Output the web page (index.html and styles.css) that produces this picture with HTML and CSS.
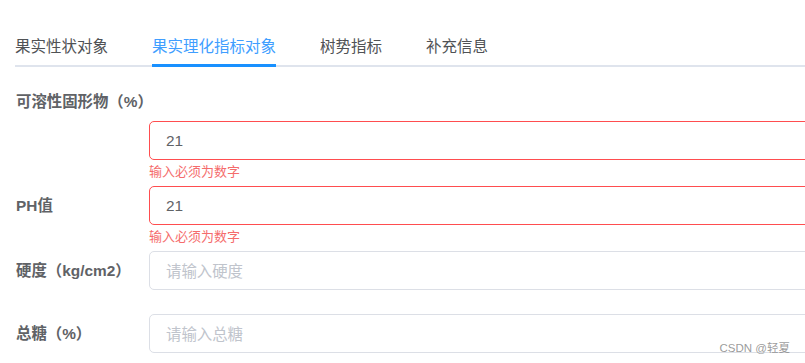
FILE: index.html
```html
<!DOCTYPE html>
<html lang="zh-CN">
<head>
<meta charset="utf-8">
<title>果实理化指标对象</title>
<link rel="stylesheet" href="styles.css">
</head>
<body>
<div class="page">
  <nav class="tabs">
    <div class="tab tab-first"><span class="tab-text">果实性状对象</span></div>
    <div class="tab active"><span class="tab-text">果实理化指标对象</span></div>
    <div class="tab"><span class="tab-text">树势指标</span></div>
    <div class="tab"><span class="tab-text">补充信息</span></div>
  </nav>

  <form class="form">
    <div class="item item-stacked has-error">
      <div class="label label-row">可溶性固形物（%）</div>
      <div class="row">
        <div class="label"></div>
        <div class="control">
          <div class="input is-error">21</div>
          <div class="error">输入必须为数字</div>
        </div>
      </div>
    </div>

    <div class="item has-error">
      <div class="row">
        <div class="label">PH值</div>
        <div class="control">
          <div class="input is-error">21</div>
          <div class="error">输入必须为数字</div>
        </div>
      </div>
    </div>

    <div class="item">
      <div class="row">
        <div class="label">硬度（kg/cm2）</div>
        <div class="control">
          <div class="input placeholder">请输入硬度</div>
        </div>
      </div>
    </div>

    <div class="item">
      <div class="row">
        <div class="label">总糖（%）</div>
        <div class="control">
          <div class="input placeholder">请输入总糖</div>
        </div>
      </div>
    </div>
  </form>
</div>
<div class="watermark">CSDN @轻夏</div>
</body>
</html>
```

FILE: styles.css
```css
html, body {
  margin: 0;
  padding: 0;
  background: #ffffff;
  overflow: hidden;
}

body {
  width: 805px;
  height: 363px;
  position: relative;
  font-family: "Liberation Sans", "Noto Sans CJK SC", sans-serif;
  color: #606266;
}

.page {
  padding: 23px 0 0 15px;
}

.tabs {
  display: flex;
  border-bottom: 2px solid #dfe4ed;
  height: 42px;
  margin-bottom: 15px;
}

.tab {
  padding: 0 22px;
  height: 42px;
  line-height: 44px;
  font-size: 15.5px;
  color: #505255;
  font-family: "Noto Sans CJK SC", sans-serif;
}

.tab-first {
  padding-left: 0;
}

.tab-text {
  display: inline-block;
  position: relative;
  height: 42px;
}

.tab.active {
  color: #409eff;
}

.tab.active .tab-text::after {
  content: "";
  position: absolute;
  left: 0;
  right: 0;
  bottom: -2px;
  height: 3px;
  background: #1890ff;
}

.form {
  display: flex;
  flex-direction: column;
}

.item {
  margin-bottom: 24px;
}

.item.has-error {
  margin-bottom: 9px;
}

.row {
  display: flex;
  align-items: flex-start;
}

.label {
  width: 134px;
  flex: none;
  box-sizing: border-box;
  padding-left: 1px;
  line-height: 39px;
  font-size: 15.4px;
  font-weight: bold;
  color: #606266;
  white-space: nowrap;
}

.label-row {
  width: auto;
  height: 39px;
}

.control {
  flex: 1;
  margin-right: -30px;
}

.input {
  height: 39px;
  box-sizing: border-box;
  border: 1px solid #dcdfe6;
  border-radius: 5px;
  padding: 0 16px;
  line-height: 37px;
  font-size: 15.4px;
  color: #606266;
}

.input.is-error {
  border-color: #ff4d4f;
}

.input.placeholder {
  color: #c0c4cc;
  font-family: "Noto Sans CJK SC", sans-serif;
}

.error {
  padding-top: 4px;
  height: 13px;
  line-height: 13px;
  font-size: 13px;
  color: #f56c6c;
  font-family: "Noto Sans CJK SC", sans-serif;
}

.watermark {
  position: absolute;
  right: 15px;
  bottom: 8px;
  font-size: 11.5px;
  line-height: 14px;
  color: rgba(120, 120, 120, 0.75);
  font-family: "Liberation Sans", "Noto Sans CJK SC", sans-serif;
}
```
